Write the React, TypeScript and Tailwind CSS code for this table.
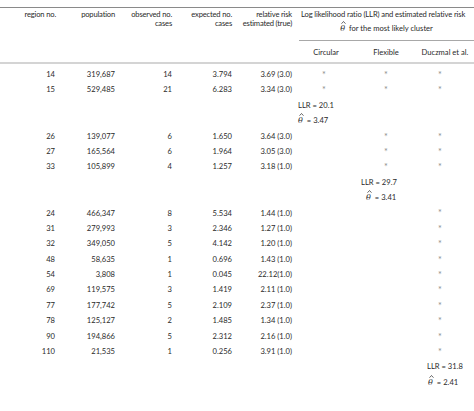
import React from "react";

type Row = {
  region: string;
  pop: string;
  obs: string;
  exp: string;
  rr: string;
  marks: [boolean, boolean, boolean];
};

type Summary = { col: 0 | 1 | 2; llr: string; theta: string };

const groups: { rows: Row[]; summary: Summary }[] = [
  {
    rows: [
      { region: "14", pop: "319,687", obs: "14", exp: "3.794", rr: "3.69 (3.0)", marks: [true, true, true] },
      { region: "15", pop: "529,485", obs: "21", exp: "6.283", rr: "3.34 (3.0)", marks: [true, true, true] },
    ],
    summary: { col: 0, llr: "20.1", theta: "3.47" },
  },
  {
    rows: [
      { region: "26", pop: "139,077", obs: "6", exp: "1.650", rr: "3.64 (3.0)", marks: [false, true, true] },
      { region: "27", pop: "165,564", obs: "6", exp: "1.964", rr: "3.05 (3.0)", marks: [false, true, true] },
      { region: "33", pop: "105,899", obs: "4", exp: "1.257", rr: "3.18 (1.0)", marks: [false, true, true] },
    ],
    summary: { col: 1, llr: "29.7", theta: "3.41" },
  },
  {
    rows: [
      { region: "24", pop: "466,347", obs: "8", exp: "5.534", rr: "1.44 (1.0)", marks: [false, false, true] },
      { region: "31", pop: "279,993", obs: "3", exp: "2.346", rr: "1.27 (1.0)", marks: [false, false, true] },
      { region: "32", pop: "349,050", obs: "5", exp: "4.142", rr: "1.20 (1.0)", marks: [false, false, true] },
      { region: "48", pop: "58,635", obs: "1", exp: "0.696", rr: "1.43 (1.0)", marks: [false, false, true] },
      { region: "54", pop: "3,808", obs: "1", exp: "0.045", rr: "22.12(1.0)", marks: [false, false, true] },
      { region: "69", pop: "119,575", obs: "3", exp: "1.419", rr: "2.11 (1.0)", marks: [false, false, true] },
      { region: "77", pop: "177,742", obs: "5", exp: "2.109", rr: "2.37 (1.0)", marks: [false, false, true] },
      { region: "78", pop: "125,127", obs: "2", exp: "1.485", rr: "1.34 (1.0)", marks: [false, false, true] },
      { region: "90", pop: "194,866", obs: "5", exp: "2.312", rr: "2.16 (1.0)", marks: [false, false, true] },
      { region: "110", pop: "21,535", obs: "1", exp: "0.256", rr: "3.91 (1.0)", marks: [false, false, true] },
    ],
    summary: { col: 2, llr: "31.8", theta: "2.41" },
  },
];

const cols = "grid grid-cols-[58px_59px_57px_60px_60px_62px_60px_58px]";
const markPad = ["pr-[2px]", "pr-0", "pr-[10px]"];
const sumPad = ["pl-[4px]", "pl-[5px]", "pl-[11px]"];
const thetaPad = ["pl-[4px]", "pl-[10px]", "pl-[12px]"];
const head = "row-span-2 text-right pr-[2px] pt-[2px] leading-[9px] tracking-[-0.18px]";

// theta with a hat drawn above it
function Theta() {
  return (
    <span className="relative inline-block font-['DejaVu_Serif',serif] italic text-[8px] leading-none">
      θ
      <svg
        className="absolute left-[1px] top-[-4px]"
        width="5"
        height="3"
        viewBox="0 0 5 3"
        fill="none"
        stroke="#2a2a2a"
        strokeWidth="0.7"
      >
        <path d="M0.5 2.7 L2.5 0.5 L4.5 2.7" />
      </svg>
    </span>
  );
}

function Cell({ children, className = "" }: { children?: React.ReactNode; className?: string }) {
  return <div className={`flex items-center h-[15.4px] ${className}`}>{children}</div>;
}

export default function App() {
  return (
    <div className="w-[474px] h-[411px] bg-white text-[#2a2a2a] text-[7.6px] font-['Lato','Open_Sans',sans-serif] pt-[7px]">
      <div className={`${cols} border-t border-[#8a8a8a] border-b-2 border-b-[#d4d4d4]`}>
        <div className={head}>region no.</div>
        <div className={head}>population</div>
        <div className={head}>
          observed no.
          <br />
          cases
        </div>
        <div className={head}>
          expected no.
          <br />
          cases
        </div>
        <div className={head}>
          relative risk
          <br />
          estimated (true)
        </div>
        <div className="col-span-3 ml-[5px] pt-[2px] pb-[7px] border-b border-[#a8a8a8] leading-[9px]">
          <div className="pl-[2px] whitespace-nowrap tracking-[-0.12px]">
            Log likelihood ratio (LLR) and estimated relative risk
          </div>
          <div className="mt-[5px] text-center">
            <Theta /> <span className="ml-[2px]">for the most likely cluster</span>
          </div>
        </div>
        <div className="h-[21px] pt-[2px] flex items-center justify-center pl-[2px]">Circular</div>
        <div className="h-[21px] pt-[2px] flex items-center justify-center">Flexible</div>
        <div className="h-[21px] pt-[2px] flex items-center justify-center">Duczmal et al.</div>
      </div>

      <div className={`${cols} pt-[3px]`}>
        {groups.map((g, gi) => (
          <React.Fragment key={gi}>
            {g.rows.map((r) => (
              <React.Fragment key={r.region}>
                <Cell className="justify-end pr-[3px]">{r.region}</Cell>
                <Cell className="justify-end pr-[2px]">{r.pop}</Cell>
                <Cell className="justify-end pr-[2px]">{r.obs}</Cell>
                <Cell className="justify-end pr-[2px]">{r.exp}</Cell>
                <Cell className="justify-end pr-[2px] whitespace-pre">{r.rr}</Cell>
                {r.marks.map((m, i) => (
                  <Cell key={i} className={`justify-center text-[#8c8c8c] text-[9px] ${markPad[i]}`}>
                    {m ? "*" : ""}
                  </Cell>
                ))}
              </React.Fragment>
            ))}
            <Cell className="col-span-5" />
            {[0, 1, 2].map((i) => (
              <Cell key={i} className={`whitespace-nowrap ${sumPad[i]}`}>
                {g.summary.col === i ? `LLR = ${g.summary.llr}` : ""}
              </Cell>
            ))}
            <Cell className="col-span-5" />
            {[0, 1, 2].map((i) => (
              <Cell key={i} className={`whitespace-nowrap ${thetaPad[i]}`}>
                {g.summary.col === i ? (
                  <>
                    <Theta />
                    <span className="ml-[4px]">= {g.summary.theta}</span>
                  </>
                ) : (
                  ""
                )}
              </Cell>
            ))}
          </React.Fragment>
        ))}
      </div>
    </div>
  );
}
